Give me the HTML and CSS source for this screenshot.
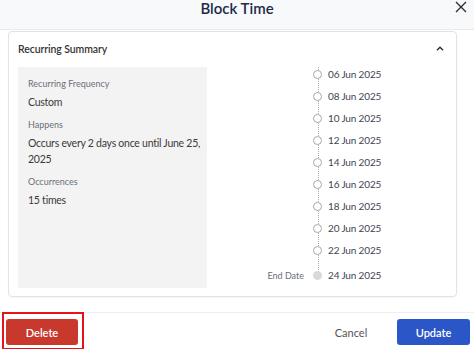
FILE: index.html
```html
<!DOCTYPE html>
<html lang="en">
<head>
  <meta charset="UTF-8">
  <meta name="viewport" content="width=device-width, initial-scale=1.0">
  <title>Block Time</title>
  <link rel="stylesheet" href="styles.css">
</head>
<body>
  <div class="modal">
    <header class="modal-header">
      <h2 class="modal-title">Block Time</h2>
      <button class="close-button" aria-label="Close">
        <svg width="12" height="12" viewBox="0 0 12 12"><path d="M1 1L11 11M11 1L1 11" stroke="#2b2b2b" stroke-width="1.3" fill="none"/></svg>
      </button>
    </header>

    <div class="modal-body">
      <section class="summary-card">
        <div class="card-head">
          <span class="card-title">Recurring Summary</span>
          <svg class="chevron" width="8" height="5" viewBox="0 0 8 5"><path d="M1 4.2L4 1.2L7 4.2" stroke="#2b2b2b" stroke-width="1.4" fill="none"/></svg>
        </div>

        <div class="card-content">
          <div class="details">
            <div class="detail-group">
              <div class="detail-label">Recurring Frequency</div>
              <div class="detail-value">Custom</div>
            </div>
            <div class="detail-group">
              <div class="detail-label">Happens</div>
              <div class="detail-value">Occurs every 2 days once until June 25, 2025</div>
            </div>
            <div class="detail-group">
              <div class="detail-label">Occurrences</div>
              <div class="detail-value">15 times</div>
            </div>
          </div>

          <ul class="timeline">
            <li class="timeline-row"><span class="row-label"></span><span class="dot"></span><span class="date">06 Jun 2025</span></li>
            <li class="timeline-row"><span class="row-label"></span><span class="dot"></span><span class="date">08 Jun 2025</span></li>
            <li class="timeline-row"><span class="row-label"></span><span class="dot"></span><span class="date">10 Jun 2025</span></li>
            <li class="timeline-row"><span class="row-label"></span><span class="dot"></span><span class="date">12 Jun 2025</span></li>
            <li class="timeline-row"><span class="row-label"></span><span class="dot"></span><span class="date">14 Jun 2025</span></li>
            <li class="timeline-row"><span class="row-label"></span><span class="dot"></span><span class="date">16 Jun 2025</span></li>
            <li class="timeline-row"><span class="row-label"></span><span class="dot"></span><span class="date">18 Jun 2025</span></li>
            <li class="timeline-row"><span class="row-label"></span><span class="dot"></span><span class="date">20 Jun 2025</span></li>
            <li class="timeline-row"><span class="row-label"></span><span class="dot"></span><span class="date">22 Jun 2025</span></li>
            <li class="timeline-row end"><span class="row-label">End Date</span><span class="dot"></span><span class="date">24 Jun 2025</span></li>
          </ul>
        </div>
      </section>
    </div>

    <footer class="modal-footer">
      <div class="delete-wrap">
        <button class="btn btn-delete">Delete</button>
      </div>
      <div class="footer-actions">
        <button class="btn btn-cancel">Cancel</button>
        <button class="btn btn-update">Update</button>
      </div>
    </footer>
  </div>
</body>
</html>
```

FILE: styles.css
```css
body {
  margin: 0;
  background: #fff;
  font-family: Lato, "Open Sans", sans-serif;
  color: #3a3a3a;
  overflow: hidden;
}

.modal {
  width: 474px;
  height: 349px;
  overflow: hidden;
}

/* header */
.modal-header {
  position: relative;
  height: 29px;
  background: #f8f9fa;
  border-bottom: 1px solid #ebebeb;
  text-align: center;
}

.modal-title {
  margin: 0;
  font-size: 15px;
  line-height: 17px;
  font-weight: 600;
  color: #1e2a4a;
}

.close-button {
  position: absolute;
  top: 1px;
  left: 455px;
  padding: 0;
  border: none;
  background: none;
  line-height: 0;
}

/* body */
.modal-body {
  padding: 1px 17px 15px 8px;
}

.summary-card {
  border: 1px solid #e3e3e3;
  border-radius: 4px;
  box-shadow: 0 1px 2px rgba(0, 0, 0, 0.04);
  padding: 0 9px 8px;
}

.card-head {
  display: flex;
  justify-content: space-between;
  align-items: center;
  height: 31px;
  padding-top: 2px;
  box-sizing: border-box;
}

.card-title {
  font-size: 10.5px;
  font-weight: 600;
  color: #333;
  letter-spacing: -0.1px;
}

.chevron {
  margin-right: 3px;
  margin-top: -1px;
}

.card-content {
  display: grid;
  grid-template-columns: 189px 1fr;
  column-gap: 47px;
}

.details {
  margin-top: 4px;
  height: 221px;
  background: #f3f3f3;
  padding: 11px 5px 0 10px;
  box-sizing: border-box;
}

.detail-group + .detail-group {
  margin-top: 9px;
}

.detail-label {
  font-size: 9px;
  line-height: 12px;
  color: #6b6f78;
  margin-bottom: 4px;
}

.detail-value {
  font-size: 10.5px;
  line-height: 16px;
  letter-spacing: -0.25px;
  color: #3a3a3a;
}

/* timeline */
.timeline {
  position: relative;
  list-style: none;
  margin: 0;
  padding: 0;
}

.timeline::before {
  content: "";
  position: absolute;
  left: 63.5px;
  top: 4px;
  bottom: 14px;
  border-left: 1px dotted #a9a9a9;
}

.timeline-row {
  display: flex;
  align-items: center;
  height: 22px;
}

.timeline-row.end {
  height: 24px;
  padding-top: 2px;
}

.row-label {
  width: 50px;
  text-align: right;
  font-size: 9px;
  color: #6b6f78;
}

.dot {
  position: relative;
  width: 9px;
  height: 9px;
  margin: 0 6px 0 9px;
  border: 1px solid #a9a9a9;
  border-radius: 50%;
  background: #fff;
  box-sizing: border-box;
}

.end .dot {
  background: #d9d9d9;
  border-color: #d9d9d9;
}

.date {
  font-size: 10px;
  letter-spacing: -0.15px;
  color: #3f4452;
}

/* footer */
.modal-footer {
  display: flex;
  justify-content: space-between;
  border-top: 1px solid #efefef;
  padding: 6px 4px 0 6px;
}

.delete-wrap {
  position: relative;
}

.delete-wrap::before {
  content: "";
  position: absolute;
  top: -7px;
  left: -4px;
  right: -6px;
  bottom: -5px;
  border: 2px solid #e3141c;
}

.btn {
  height: 26px;
  border: none;
  border-radius: 3px;
  font-family: inherit;
  font-size: 11px;
  font-weight: 600;
  padding: 0;
  cursor: pointer;
}

.btn-delete {
  width: 72px;
  background: #c9382d;
  color: #fff;
}

.footer-actions {
  display: flex;
  gap: 10px;
}

.btn-cancel {
  width: 72px;
  background: none;
  color: #555;
  font-weight: 400;
}

.btn-update {
  width: 73px;
  background: #2b56c7;
  color: #fff;
}
```
